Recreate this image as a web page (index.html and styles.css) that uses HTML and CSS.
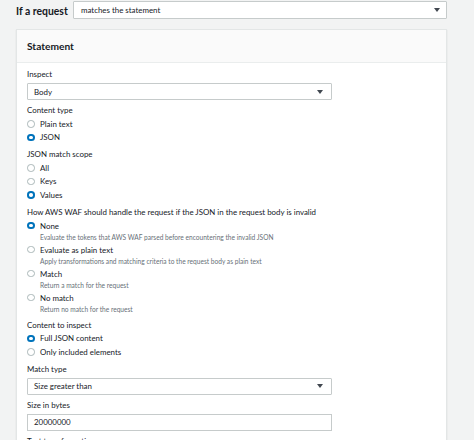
FILE: index.html
```html
<!DOCTYPE html>
<html>
<head>
<meta charset="utf-8">
<link rel="stylesheet" href="styles.css">
</head>
<body>
<div class="page">
  <div class="top-row">
    <span class="top-label">If a request</span>
    <div class="select select-top">
      <span>matches the statement</span>
      <span class="caret"></span>
    </div>
  </div>

  <div class="card">
    <div class="card-header">Statement</div>
    <div class="card-body">
      <div class="label first">Inspect</div>
      <div class="select select-field">
        <span>Body</span>
        <span class="caret"></span>
      </div>

      <div class="label">Content type</div>
      <div class="radio-row"><span class="radio"></span><span>Plain text</span></div>
      <div class="radio-row"><span class="radio on"></span><span>JSON</span></div>

      <div class="label">JSON match scope</div>
      <div class="radio-row"><span class="radio"></span><span>All</span></div>
      <div class="radio-row"><span class="radio"></span><span>Keys</span></div>
      <div class="radio-row"><span class="radio on"></span><span>Values</span></div>

      <div class="label">How AWS WAF should handle the request if the JSON in the request body is invalid</div>
      <div class="radio-groups">
        <div class="radio-group">
          <div class="radio-title"><span class="radio on"></span><span>None</span></div>
          <div class="radio-desc">Evaluate the tokens that AWS WAF parsed before encountering the invalid JSON</div>
        </div>
        <div class="radio-group">
          <div class="radio-title"><span class="radio"></span><span>Evaluate as plain text</span></div>
          <div class="radio-desc">Apply transformations and matching criteria to the request body as plain text</div>
        </div>
        <div class="radio-group">
          <div class="radio-title"><span class="radio"></span><span>Match</span></div>
          <div class="radio-desc">Return a match for the request</div>
        </div>
        <div class="radio-group">
          <div class="radio-title"><span class="radio"></span><span>No match</span></div>
          <div class="radio-desc">Return no match for the request</div>
        </div>
      </div>

      <div class="label">Content to inspect</div>
      <div class="radio-row"><span class="radio on"></span><span>Full JSON content</span></div>
      <div class="radio-row"><span class="radio"></span><span>Only included elements</span></div>

      <div class="label">Match type</div>
      <div class="select select-field">
        <span>Size greater than</span>
        <span class="caret"></span>
      </div>

      <div class="label">Size in bytes</div>
      <div class="input-field">20000000</div>

      <div class="label">Text transformation</div>
    </div>
  </div>
</div>
</body>
</html>
```

FILE: styles.css
```css
html, body {
  margin: 0;
  padding: 0;
}
body {
  background: #f2f3f3;
  font-family: "Lato", "Open Sans", sans-serif;
  color: #16191f;
  width: 474px;
  height: 440px;
  overflow: hidden;
}
.page {
  padding-left: 16px;
}
.top-row {
  display: flex;
  align-items: center;
  height: 21px;
}
.top-label {
  flex: none;
  white-space: nowrap;
  font-weight: 700;
  font-size: 10.4px;
  width: 57px;
}
.select {
  box-sizing: border-box;
  display: flex;
  align-items: center;
  justify-content: space-between;
  background: #fff;
  border: 1px solid #c6cbcb;
  border-radius: 1px;
  font-size: 7.9px;
}
.select-top {
  width: 374px;
  height: 18px;
  padding: 0 6px 0 7px;
  margin-top: -1px;
}
.caret {
  width: 0;
  height: 0;
  border-left: 3.5px solid transparent;
  border-right: 3.5px solid transparent;
  border-top: 4.5px solid #414750;
}
.card {
  margin-top: 8px;
  width: 431px;
  box-sizing: border-box;
  background: #fff;
  border: 1px solid #e3e6e6;
  box-shadow: 0 1px 1px rgba(0,28,36,0.15);
}
.card-header {
  height: 33px;
  box-sizing: border-box;
  background: #fafafa;
  border-bottom: 1px solid #eaeded;
  display: flex;
  align-items: center;
  padding-left: 10px;
  font-weight: 700;
  font-size: 10.2px;
}
.card-body {
  padding-left: 10px;
  padding-bottom: 20px;
}
.label {
  font-size: 7.9px;
  line-height: 13px;
  height: 13px;
  margin-top: 4px;
  white-space: nowrap;
}
.label.first {
  margin-top: 5px;
}
.select-field {
  margin-top: 2px;
  width: 305px;
  height: 17px;
  padding: 0 8px 0 6px;
}
.select-field + .label,
.input-field + .label {
  margin-top: 4px;
}
.input-field {
  box-sizing: border-box;
  margin-top: 2px;
  width: 305px;
  height: 17px;
  background: #fff;
  border: 1px solid #c6cbcb;
  display: flex;
  align-items: center;
  padding-left: 6px;
  font-size: 7.9px;
}
.radio-row {
  display: flex;
  align-items: center;
  height: 13.5px;
  font-size: 7.9px;
}
.radio {
  box-sizing: border-box;
  width: 7.5px;
  height: 7.5px;
  border-radius: 50%;
  border: 1px solid #aab7b8;
  background: #fff;
  margin-right: 5.5px;
  flex: none;
}
.radio.on {
  border: 2.2px solid #0073bb;
}
.radio-groups {
  padding-top: 1px;
  padding-bottom: 1px;
}
.radio-group + .radio-group {
  margin-top: 2px;
}
.radio-title {
  display: flex;
  align-items: center;
  height: 12px;
  font-size: 7.9px;
}
.radio-desc {
  font-size: 6.6px;
  line-height: 10px;
  height: 10px;
  color: #687078;
  padding-left: 13px;
  white-space: nowrap;
}
```
